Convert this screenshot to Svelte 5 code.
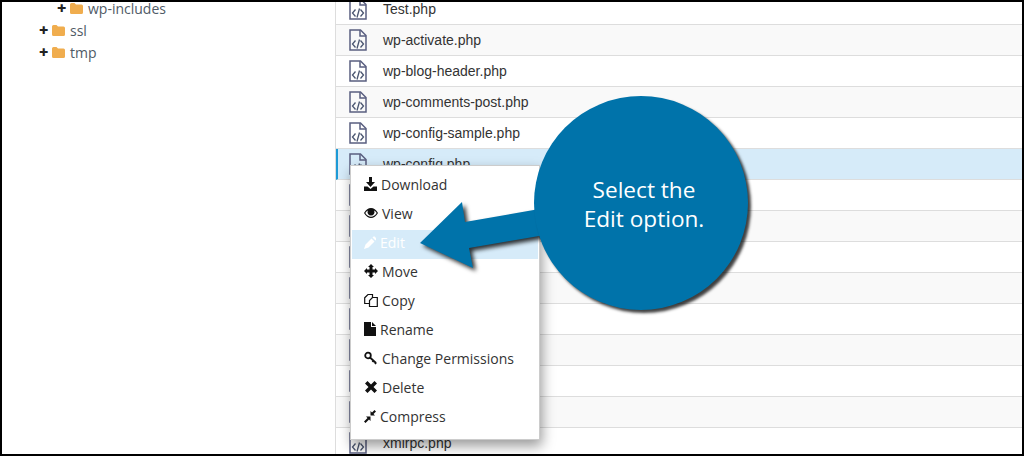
<script>
	const files = ['Test.php', 'wp-activate.php', 'wp-blog-header.php', 'wp-comments-post.php', 'wp-config-sample.php', 'wp-config.php', '', '', '', '', '', '', '', '', 'xmlrpc.php'];
	const folders = [
		{ name: 'wp-includes', sub: true },
		{ name: 'ssl', sub: false },
		{ name: 'tmp', sub: false }
	];
	// w is the glyph width, the label follows right after it
	const menu = [
		{ label: 'Download', icon: 'download', w: 13 },
		{ label: 'View', icon: 'view', w: 14 },
		{ label: 'Edit', icon: 'edit', w: 12 },
		{ label: 'Move', icon: 'move', w: 14 },
		{ label: 'Copy', icon: 'copy', w: 14 },
		{ label: 'Rename', icon: 'rename', w: 12 },
		{ label: 'Change Permissions', icon: 'key', w: 14 },
		{ label: 'Delete', icon: 'delete', w: 14 },
		{ label: 'Compress', icon: 'compress', w: 12 }
	];
</script>

<div class="frame">
	<aside class="tree">
		{#each folders as folder}
			<div class="node" class:sub={folder.sub}>
				<span class="plus">+</span>
				<svg class="folder" viewBox="0 0 13 11"><path d="M0 1.500Q0 0 1.500 0h3L6 1.500h5.500Q13 1.500 13 3v6.500q0 1.500-1.500 1.500h-10Q0 11 0 9.500z" /></svg>
				{folder.name}
			</div>
		{/each}
	</aside>

	<main class="list">
		{#each files as file, i}
			<div class="row" class:odd={i % 2 === 1} class:selected={file === 'wp-config.php'}>
				<svg class="fileicon" viewBox="0 0 18 22">
					<path class="outline" d="M1 1h10.500L17 6.500V21H1z" />
					<path class="outline" d="M11 1v6h6" />
					<path class="code" d="M6.500 11.500L3.500 15l3 3.500M10.500 10.500l-2.500 9M11.500 11.500l3 3.500-3 3.500" />
				</svg>
				<span>{file}</span>
			</div>
		{/each}
	</main>

	<ul class="menu">
		{#each menu as item}
			<li class:hover={item.icon === 'edit'}>
				<svg class="icon" style="width: {item.w}px" viewBox="0 0 {item.w} 14">
					{#if item.icon === 'download'}
						<path d="M5 0h3v5h3l-4.500 5L2 5h3zM0 9.500h3.500l3 2.500 3-2.500H13V14H0z" />
					{:else if item.icon === 'view'}
						<path fill-rule="evenodd" d="M0 7Q3 2 7 2t7 5q-3 5-7 5T0 7zm1.300 0q2.500 3.800 5.700 3.800T12.700 7q-1-1.600-2.600-2.500a3.500 3.500 0 1 1-6.200 0Q2.300 5.400 1.300 7z" />
					{:else if item.icon === 'edit'}
						<path d="M8.500 2.500l3 3 .8-.8q.7-.8 0-1.500l-1.500-1.500q-.8-.7-1.500 0zM7.500 3.500L1.500 9.500 0 14l4.500-1.500 6-6z" />
					{:else if item.icon === 'move'}
						<path d="M7 0l3 3H8.500v2.500H11V4l3 3-3 3V8.500H8.500V11H10l-3 3-3-3h1.500V8.500H3V10L0 7l3-3v1.500h2.500V3H4z" />
					{:else if item.icon === 'copy'}
						<path class="line" d="M.7 4.700L4 1.500h4.500v9H.7z" />
						<path class="line page" d="M8.500 4.500h4.800v9H5.500V7.500z" />
					{:else if item.icon === 'rename'}
						<path d="M0 0h7v5h5v9H0zM8 0l4 4H8z" />
					{:else if item.icon === 'key'}
						<circle class="line thick" cx="4" cy="4.500" r="2.800" />
						<path class="line thick" d="M6 6.500l6 5.500M9.500 9.500l-1 1.500M12 11.500l-1 1.500" />
					{:else if item.icon === 'delete'}
						<path d="M1 3.500L3.500 1 7 4.500 10.500 1 13 3.500 9.500 7l3.500 3.500-2.500 2.500L7 9.500 3.500 13 1 10.500 4.500 7z" />
					{:else}
						<path d="M1.500 14L0 12.500 3.500 9 2 7.500h4.500V12L5 10.500zM6.500 6.500V2L8 3.500 10.500 1 12 2.500 9.500 5 11 6.500z" />
					{/if}
				</svg>
				<span>{item.label}</span>
			</li>
		{/each}
	</ul>

	<!-- callout sits over the list and the menu -->
	<svg class="arrow" viewBox="0 0 125 70">
		<path d="M0 41L42 0 45 20 125 6V33L49 46 53 66z" />
	</svg>
	<div class="bubble">Select the<br />Edit option.</div>
</div>

<style>
	:global(body) {
		margin: 0;
		background: #000;
	}

	.frame {
		position: relative;
		display: flex;
		width: 1020px;
		height: 452px;
		margin: 2px;
		overflow: hidden;
		background: #fff;
		font-family: 'Open Sans', sans-serif;
	}

	.tree {
		box-sizing: border-box;
		width: 334px;
		flex: none;
		margin-top: -5px;
		color: #4f5a66;
		font-size: 14px;
		border-right: 1px solid #ddd;
	}

	.node {
		display: flex;
		align-items: center;
		height: 22px;
		padding-left: 38px;
	}

	.node.sub {
		padding-left: 56px;
	}

	.plus {
		width: 12px;
		font-weight: 800;
		font-size: 16px;
		line-height: 1;
		color: #222;
		margin-left: -1px;
		margin-right: 1px;
	}

	.folder {
		width: 13px;
		height: 11px;
		margin-right: 5px;
		fill: #f0ad4e;
	}

	.list {
		flex: 1;
		margin-top: -8px;
		min-width: 0;
	}

	.row {
		box-sizing: border-box;
		display: flex;
		align-items: center;
		height: 31px;
		padding-left: 13px;
		border-bottom: 1px solid #ddd;
		font-family: 'Liberation Sans', Arial, sans-serif;
		font-size: 14px;
		color: #333;
	}

	.row.odd {
		background: #f9f9f9;
	}

	.row.selected {
		background: #d6ebf9;
		border-left: 2px solid #1d9ad6;
		padding-left: 11px;
	}

	.fileicon {
		width: 18px;
		height: 22px;
		margin-right: 16px;
		flex: none;
		fill: none;
	}

	.outline {
		stroke: #5a5f80;
		stroke-width: 1.500;
	}

	.code {
		stroke: #4a5570;
		stroke-width: 1.300;
	}

	.menu {
		position: absolute;
		left: 348px;
		top: 163px;
		box-sizing: border-box;
		width: 190px;
		height: 275px;
		margin: 0;
		padding: 6px 1px 0;
		list-style: none;
		background: #fff;
		border: 1px solid #ccc;
		box-shadow: 2px 6px 12px rgba(0, 0, 0, 0.4);
		font-size: 14px;
		color: #333;
	}

	.menu li {
		box-sizing: border-box;
		display: flex;
		align-items: center;
		gap: 4px;
		height: 29px;
		padding: 0 0 5px 12px;
	}

	.menu li.hover {
		background: #d6ebf9;
		color: #fff;
	}

	.icon {
		height: 14px;
		flex: none;
		fill: #111;
	}

	.menu li.hover .icon {
		fill: #fff;
	}

	.line {
		fill: none;
		stroke: #111;
		stroke-width: 1.200;
	}

	.line.page {
		fill: #fff;
	}

	.line.thick {
		stroke-width: 1.800;
	}

	.arrow {
		position: absolute;
		left: 418px;
		top: 200px;
		width: 125px;
		height: 70px;
		overflow: visible;
		fill: #0073aa;
		filter: drop-shadow(3px 3px 2px rgba(0, 0, 0, 0.8));
	}

	.bubble {
		position: absolute;
		left: 532px;
		top: 94px;
		display: flex;
		align-items: center;
		justify-content: center;
		width: 214px;
		height: 214px;
		padding: 1px 0 0 6px;
		box-sizing: border-box;
		border-radius: 50%;
		background: #0073aa;
		box-shadow: 3px 3px 3px rgba(0, 0, 0, 0.75);
		color: #fff;
		font-size: 22.6px;
		line-height: 29px;
		text-align: center;
	}
</style>
